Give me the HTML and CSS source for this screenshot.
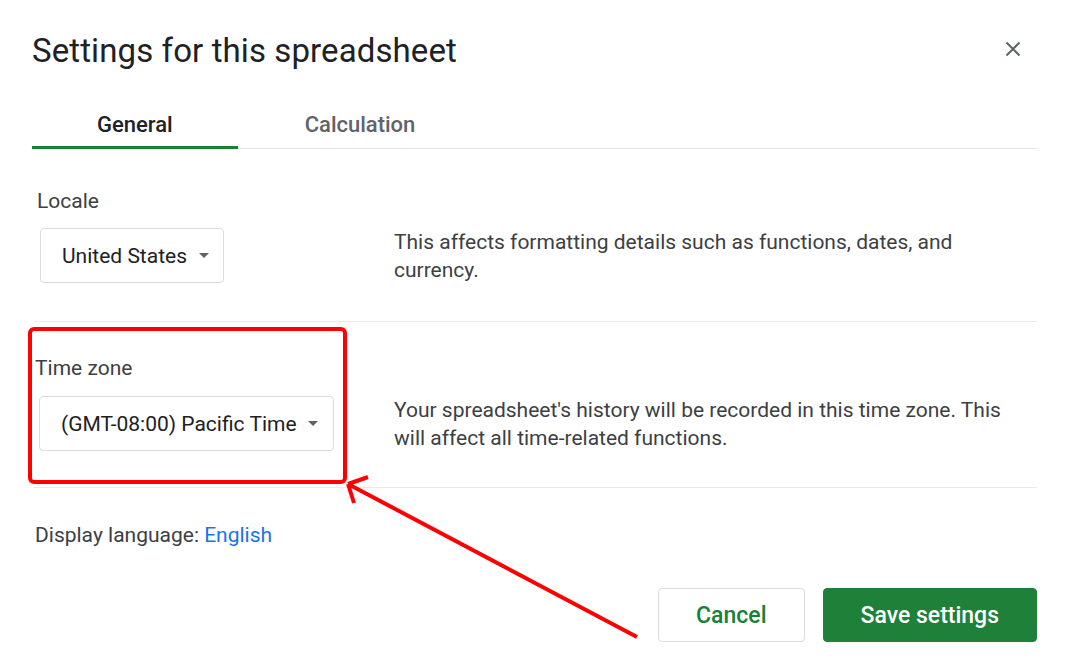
FILE: index.html
```html
<!DOCTYPE html>
<html lang="en">
<head>
<meta charset="utf-8">
<title>Settings for this spreadsheet</title>
<link rel="stylesheet" href="styles.css">
</head>
<body>
<div class="dialog">
  <div class="header">
    <h1 class="title">Settings for this spreadsheet</h1>
    <button class="close" aria-label="Close">
      <svg width="16" height="16" viewBox="0 0 16 16"><path d="M1.5 1.5 L14.5 14.5 M14.5 1.5 L1.5 14.5" stroke="#5f6368" stroke-width="2" fill="none"/></svg>
    </button>
  </div>
  <div class="tabs">
    <div class="tab active">General</div>
    <div class="tab">Calculation</div>
  </div>
  <div class="row row-locale">
    <div class="field">
      <div class="label">Locale</div>
      <div class="select select-locale"><span>United States</span><span class="caret"></span></div>
    </div>
    <div class="desc">This affects formatting details such as functions, dates, and currency.</div>
  </div>
  <div class="row row-tz">
    <div class="field">
      <div class="label">Time zone</div>
      <div class="select select-tz"><span>(GMT-08:00) Pacific Time</span><span class="caret"></span></div>
    </div>
    <div class="desc">Your spreadsheet's history will be recorded in this time zone. This will affect all time-related functions.</div>
  </div>
  <div class="footer">
    <div class="lang">Display language: <a class="link" href="#">English</a></div>
    <div class="actions">
      <button class="btn btn-cancel">Cancel</button>
      <button class="btn btn-save">Save settings</button>
    </div>
  </div>
</div>
<svg class="annotation" width="1071" height="668" viewBox="0 0 1071 668">
  <rect x="30" y="329" width="315" height="153" rx="4" ry="4" fill="none" stroke="#ff0000" stroke-width="4"/>
  <path d="M637 637 L348 484 M348 484 L368 477 M348 484 L354 503" fill="none" stroke="#ff0000" stroke-width="4" stroke-linecap="butt" stroke-linejoin="miter"/>
</svg>
</body>
</html>
```

FILE: styles.css
```css
* { box-sizing: border-box; }
html, body { margin: 0; padding: 0; background: #ffffff; }
body {
  font-family: Roboto, "Liberation Sans", Arial, sans-serif;
  color: #3c4043;
  width: 1071px;
  height: 668px;
  overflow: hidden;
  position: relative;
}
.dialog {
  padding: 31px 34px 0 32px;
}
.header {
  display: flex;
  justify-content: space-between;
  align-items: flex-start;
}
.title {
  margin: 0;
  font-size: 33px;
  line-height: 40px;
  font-weight: 400;
  color: #202124;
  letter-spacing: 0.1px;
}
.close {
  width: 40px;
  height: 40px;
  margin: -2px 4px 0 0;
  border: 0;
  background: transparent;
  padding: 0;
  display: flex;
  align-items: center;
  justify-content: center;
}
.tabs {
  display: flex;
  margin-top: 26px;
  border-bottom: 1px solid #e3e3ea;
}
.tab {
  padding: 14px 65px 7px;
  font-size: 22px;
  line-height: 28px;
  font-weight: 500;
  color: #5f6368;
  border-bottom: 3px solid transparent;
  margin-bottom: -1px;
}
.tab + .tab { padding-left: 67px; }
.tab.active {
  color: #202124;
  border-bottom-color: #188038;
}
.row {
  display: flex;
  align-items: flex-end;
  border-bottom: 1px solid #e8eaed;
  margin-left: 2px;
}
.row-locale { padding: 40px 0 38px; }
.row-tz { padding: 34px 0 36px; }
.field {
  width: 360px;
  flex: none;
}
.label {
  font-size: 21px;
  line-height: 24px;
  color: #3c4043;
  margin-left: 3px;
}
.row-locale .label { margin-bottom: 15px; }
.row-tz .label { margin-bottom: 16px; margin-left: 1px; }
.select {
  display: inline-flex;
  align-items: center;
  height: 55px;
  border: 1px solid #dadce0;
  border-radius: 4px;
  padding: 0 14px 0 21px;
  font-size: 21px;
  color: #202124;
  margin-left: 6px;
}
.row-tz .select { margin-left: 5px; padding-right: 15px; }
.caret {
  width: 0;
  height: 0;
  border-left: 5px solid transparent;
  border-right: 5px solid transparent;
  border-top: 5px solid #5f6368;
  margin-left: 12px;
}
.row-tz .caret { margin-left: 11px; }
.desc {
  flex: 1;
  font-size: 21px;
  line-height: 28px;
  color: #3c4043;
  max-width: 625px;
  height: 55px;
  display: flex;
  align-items: center;
}
.footer {
  padding-top: 35px;
}
.lang {
  font-size: 21px;
  line-height: 24px;
  color: #3c4043;
  margin-left: 3px;
}
.link {
  color: #1a73e8;
  text-decoration: none;
}
.actions {
  display: flex;
  justify-content: flex-end;
  gap: 18px;
  margin-top: 41px;
}
.btn {
  height: 54px;
  padding: 0 37px;
  border-radius: 4px;
  font-family: Roboto, "Liberation Sans", Arial, sans-serif;
  font-size: 23px;
  font-weight: 500;
  cursor: pointer;
}
.btn-cancel {
  background: #ffffff;
  border: 1px solid #dadce0;
  color: #188038;
}
.btn-save {
  background: #1e8039;
  border: 1px solid #1e8039;
  color: #ffffff;
}
.annotation {
  position: absolute;
  left: 0;
  top: 0;
  pointer-events: none;
}
```
